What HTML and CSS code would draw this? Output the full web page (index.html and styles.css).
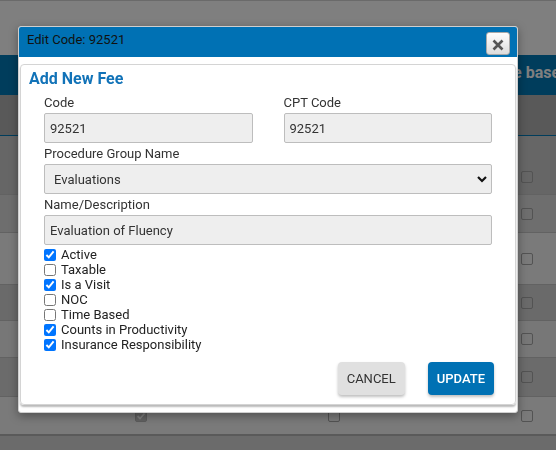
FILE: index.html
```html
<!DOCTYPE html>
<html lang="en">
<head>
<meta charset="utf-8">
<title>Edit Code</title>
<link rel="stylesheet" href="styles.css">
</head>
<body>
<div class="page">
  <div class="topbar"></div>
  <div class="banner"><span class="banner-text">Time base</span></div>
  <div class="thead"></div>
  <div class="trow r1"><span></span><span class="cb"></span><span class="cb"></span><span class="cb"></span></div>
  <div class="trow r2"><span></span><span class="cb"></span><span class="cb"></span><span class="cb"></span></div>
  <div class="trow r3"><span></span><span class="cb"></span><span class="cb"></span><span class="cb"></span></div>
  <div class="trow r4"><span></span><span class="cb"></span><span class="cb"></span><span class="cb"></span></div>
  <div class="trow r5"><span></span><span class="cb"></span><span class="cb"></span><span class="cb"></span></div>
  <div class="trow r6"><span></span><span class="cb"></span><span class="cb"></span><span class="cb"></span></div>
  <div class="trow r7"><span></span><span class="cb cb-on"><svg viewBox="0 0 12 12" width="12" height="12"><polyline points="2.5,6 5,8.5 9.5,3.5" fill="none" stroke="#fff" stroke-width="1.8"/></svg></span><span class="cb"></span><span class="cb"></span></div>
  <div class="tfoot"></div>
</div>

<div class="overlay"></div>

<div class="dialog">
  <div class="dlg-title">
    <span class="dlg-title-text">Edit Code: 92521</span>
    <button class="dlg-close" type="button" aria-label="Close">
      <svg viewBox="0 0 12 12" width="12" height="12"><path d="M1.5 1.5 L10.5 10.5 M10.5 1.5 L1.5 10.5" stroke="#555" stroke-width="2.6" fill="none"/></svg>
    </button>
  </div>
  <div class="dlg-body">
    <div class="panel">
      <h2 class="panel-heading">Add New Fee</h2>
      <div class="grid2">
        <div class="field">
          <label class="field-label">Code</label>
          <input class="field-input" type="text" value="92521">
        </div>
        <div class="field">
          <label class="field-label">CPT Code</label>
          <input class="field-input" type="text" value="92521">
        </div>
      </div>
      <div class="field field-gap">
        <label class="field-label">Procedure Group Name</label>
        <div class="select-wrap">
          <select class="field-select"><option>Evaluations</option></select>
          <svg class="chev" viewBox="0 0 10 7" width="10" height="7"><polyline points="1,1 5,5 9,1" fill="none" stroke="#111" stroke-width="2.2"/></svg>
        </div>
      </div>
      <div class="field field-gap">
        <label class="field-label">Name/Description</label>
        <input class="field-input" type="text" value="Evaluation of Fluency">
      </div>
      <div class="checks">
        <label class="check"><input class="check-box" type="checkbox" checked>Active</label>
        <label class="check"><input class="check-box" type="checkbox">Taxable</label>
        <label class="check"><input class="check-box" type="checkbox" checked>Is a Visit</label>
        <label class="check"><input class="check-box" type="checkbox">NOC</label>
        <label class="check"><input class="check-box" type="checkbox">Time Based</label>
        <label class="check"><input class="check-box" type="checkbox" checked>Counts in Productivity</label>
        <label class="check"><input class="check-box" type="checkbox" checked>Insurance Responsibility</label>
      </div>
      <div class="actions">
        <button class="btn btn-cancel" type="button">Cancel</button>
        <button class="btn btn-update" type="button">Update</button>
      </div>
    </div>
  </div>
</div>
</body>
</html>
```

FILE: styles.css
```css
html, body {
  margin: 0;
  padding: 0;
}

body {
  width: 556px;
  height: 450px;
  overflow: hidden;
  position: relative;
  font-family: Roboto, "Liberation Sans", Arial, sans-serif;
  background: #fff;
}

/* ---------- underlying page ---------- */
.page {
  width: 556px;
}

.topbar {
  height: 55px;
  background: #fff;
  border-top: 1px solid #d4d4d4;
  box-sizing: border-box;
}

.banner {
  height: 40px;
  box-sizing: border-box;
  background: #007ab8;
  padding: 8px 0 0 485px;
  color: #fff;
  font-size: 16px;
  font-weight: 700;
  line-height: 20px;
  white-space: nowrap;
  overflow: hidden;
}

.thead {
  height: 41px;
  box-sizing: border-box;
  background: #b3b3b3;
  border-bottom: 1px solid #007ab8;
}

.trow {
  display: grid;
  grid-template-columns: 135px 193px 193px 1fr;
  align-items: center;
  box-sizing: border-box;
  border-bottom: 1px solid #c4c4c4;
}

.r1 { height: 59px; background: #cccccc; padding-top: 24px; }
.r2 { height: 38px; background: #dcdcdc; }
.r3 { height: 52px; background: #f4f4f4; }
.r4 { height: 36px; background: #d4d4d4; }
.r5 { height: 37px; background: #eeeeee; }
.r6 { height: 39px; background: #d6d6d6; }
.r7 { height: 39px; background: #f4f4f4; border-bottom: 2px solid #b4b4b4; }

.tfoot {
  height: 20px;
  background: #d6d6d6;
}

.cb {
  width: 12px;
  height: 12px;
  box-sizing: border-box;
  border: 1px solid #a6a6a6;
  border-radius: 2px;
  display: block;
}

.cb-on {
  background: #c4c4c4;
  border-color: #b8b8b8;
}

.cb-on svg {
  display: block;
  margin: -1px;
}

.overlay {
  position: fixed;
  inset: 0;
  background: rgba(0, 0, 0, 0.5);
}

/* ---------- dialog ---------- */
.dialog {
  position: absolute;
  left: 18px;
  top: 26px;
  width: 500px;
  box-sizing: border-box;
  border: 1px solid #cfcfcf;
  border-radius: 3px;
  background: #fff;
  box-shadow: 0 3px 10px rgba(0, 0, 0, 0.35);
  overflow: hidden;
}

.dlg-title {
  height: 30px;
  box-sizing: border-box;
  background: #0071b4;
  display: flex;
  justify-content: space-between;
  align-items: flex-start;
  padding: 5px 7px 0 8px;
}

.dlg-title-text {
  font-size: 13px;
  line-height: 16px;
  color: #111;
}

.dlg-close {
  width: 24px;
  height: 23px;
  box-sizing: border-box;
  padding: 2px 0 0 0;
  border: 1px solid #a9a9a9;
  border-radius: 3px;
  background: linear-gradient(#fdfdfd, #dcdcdc);
  display: flex;
  align-items: center;
  justify-content: center;
}

.dlg-close svg {
  display: block;
}

.dlg-body {
  padding: 7px 1px;
}

.panel {
  border: 1px solid #d4d4d4;
  border-radius: 4px;
  box-shadow: 0 2px 2px rgba(0, 0, 0, 0.28);
  padding: 4px 23px 9px 23px;
}

.panel-heading {
  margin: 0 0 6px -15px;
  font-size: 16px;
  line-height: 20px;
  font-weight: 700;
  color: #1273b8;
}

.grid2 {
  display: grid;
  grid-template-columns: 1fr 1fr;
  column-gap: 31px;
}

.field {
  display: flex;
  flex-direction: column;
}

.field-gap {
  margin-top: 3px;
}

.field-label {
  font-size: 13px;
  line-height: 16px;
  color: #333;
  margin-bottom: 2px;
}

.field-input,
.field-select {
  height: 30px;
  width: 100%;
  box-sizing: border-box;
  border: 1px solid #bdbdbd;
  border-radius: 2px;
  background: #eeeeee;
  font-family: inherit;
  font-size: 13px;
  color: #333;
  margin: 0;
  outline: none;
}

.field-input {
  padding: 0 5px;
}

.select-wrap {
  position: relative;
}

.field-select {
  appearance: none;
  -webkit-appearance: none;
  padding: 0 9px;
  display: block;
}

.chev {
  position: absolute;
  right: 5px;
  top: 12px;
  pointer-events: none;
}

.checks {
  margin-top: 2px;
  display: flex;
  flex-direction: column;
}

.check {
  display: flex;
  align-items: center;
  height: 15px;
  font-size: 13px;
  line-height: 15px;
  color: #222;
}

.check-box {
  width: 12px;
  height: 12px;
  margin: 0 5px 0 0;
}

.actions {
  display: flex;
  justify-content: flex-end;
  gap: 23px;
  margin-top: 10px;
  margin-right: -2px;
}

.btn {
  height: 33px;
  padding: 0 9px;
  border: none;
  border-radius: 4px;
  font-family: inherit;
  font-size: 13px;
  text-transform: uppercase;
  box-shadow: 0 2px 3px rgba(0, 0, 0, 0.25);
}

.btn-cancel {
  background: #e0e0e0;
  color: #333;
  min-width: 67px;
}

.btn-update {
  background: #0071b4;
  color: #fff;
  font-weight: 500;
  min-width: 66px;
}
```
